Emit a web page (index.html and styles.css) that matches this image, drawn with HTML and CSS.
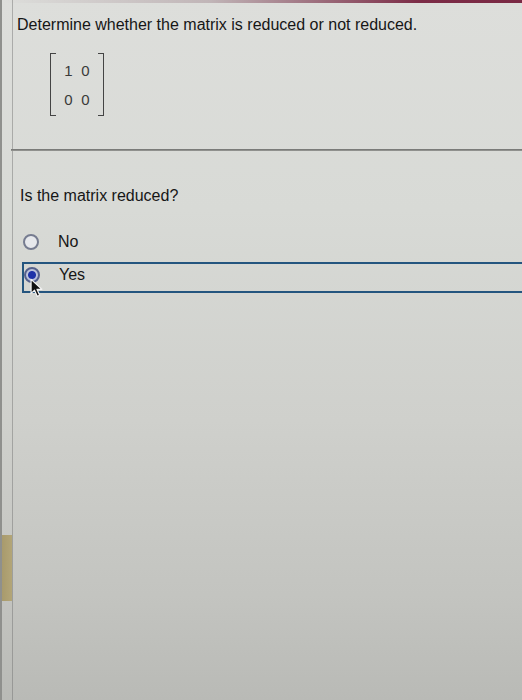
FILE: index.html
```html
<!DOCTYPE html>
<html>
<head>
<meta charset="utf-8">
<link rel="stylesheet" href="styles.css">
</head>
<body>
<div class="page">
  <div class="topbar"></div>
  <div class="gutter"><div class="tab"></div></div>
  <div class="content">
    <p class="title">Determine whether the matrix is reduced or not reduced.</p>
    <div class="matrix">
      <span>1</span><span>0</span>
      <span>0</span><span>0</span>
    </div>
    <div class="rule"></div>
    <p class="question">Is the matrix reduced?</p>
    <div class="options">
      <label class="option">
        <span class="radio"></span>
        <span class="label">No</span>
      </label>
      <label class="option selected">
        <span class="radio checked"></span>
        <span class="label">Yes</span>
        <svg class="cursor" width="14" height="20" viewBox="0 0 13 18">
          <path d="M1 1 L1 14 L4.2 11 L6.8 16.8 L9 15.8 L6.5 10.2 L11 10.2 Z" fill="#111" stroke="#f4f4f4" stroke-width="1.1" stroke-linejoin="round"/>
        </svg>
      </label>
    </div>
  </div>
</div>
</body>
</html>
```
FILE: styles.css
```css
html, body {
  margin: 0;
  padding: 0;
}
body {
  font-family: "Liberation Sans", Arial, sans-serif;
  color: #1c1c1c;
}
.page {
  position: relative;
  display: flex;
  width: 522px;
  height: 700px;
  overflow: hidden;
  background: linear-gradient(180deg, #dddedb 0%, #d8dad6 30%, #cfd0cc 60%, #c3c4c0 85%, #b9bab6 100%);
  border-left: 2px solid #8f908d;
  box-sizing: border-box;
}
.topbar {
  position: absolute;
  top: 0;
  left: 0;
  right: 0;
  height: 3px;
  background: linear-gradient(90deg, rgba(170,170,170,0) 0%, rgba(150,120,130,0.4) 40%, #7c2c47 80%, #7a2944 100%);
}
.gutter {
  flex: 0 0 auto;
  width: 10px;
  border-right: 1px solid rgba(110,110,110,0.45);
}
.tab {
  margin-top: 535px;
  height: 66px;
  background: linear-gradient(90deg, #a89a6c, #b3a678);
}
.content {
  flex: 1 1 auto;
  display: flex;
  flex-direction: column;
  min-width: 0;
}
.title {
  margin: 15px 0 0 4px;
  font-size: 16px;
  line-height: 19px;
  white-space: nowrap;
  color: #161616;
}
.matrix {
  position: relative;
  margin: 19px 0 0 37px;
  width: 54px;
  height: 63px;
  box-sizing: border-box;
  display: grid;
  grid-template-columns: 17px 17px;
  grid-template-rows: 29px 29px;
  align-content: center;
  justify-content: center;
  font-family: "Liberation Sans", Arial, sans-serif;
  font-size: 15px;
  color: #3a3a3a;
  border-left: 1.5px solid #444;
  border-right: 1.5px solid #444;
}
.matrix::before,
.matrix::after {
  content: "";
  position: absolute;
  top: 0;
  bottom: 0;
  width: 5px;
  border-top: 1.5px solid #444;
  border-bottom: 1.5px solid #444;
}
.matrix::before { left: 0; }
.matrix::after { right: 0; }
.matrix span {
  display: flex;
  align-items: center;
  justify-content: center;
}
.rule {
  margin: 33px 0 0 -2px;
  height: 2px;
  background: linear-gradient(180deg, #6f706e, #9a9b98);
}
.question {
  margin: 35px 0 0 7px;
  font-size: 16px;
  line-height: 19px;
  color: #161616;
}
.options {
  margin: 22px 0 0 0;
  display: flex;
  flex-direction: column;
  gap: 5px;
}
.option {
  position: relative;
  display: flex;
  align-items: center;
  gap: 19px;
  height: 30px;
  padding-left: 10px;
  font-size: 16px;
  color: #161616;
}
.option.selected {
  margin-left: 9px;
  padding-left: 0;
  padding-bottom: 5px;
  box-sizing: border-box;
  height: 31px;
  border-top: 2px solid #24557f;
  border-bottom: 2px solid #24557f;
  border-left: 2px solid #24557f;
  margin-right: -4px;
}
.radio {
  width: 12px;
  height: 12px;
  border-radius: 50%;
  border: 2px solid #767c90;
  background: #e6e8ec;
  flex: 0 0 auto;
}
.radio.checked {
  border-color: #55618c;
  background: radial-gradient(circle, #1f33a8 0 3.5px, #bcc3dc 4.5px);
}
.label {
  margin-left: 0;
}
.cursor {
  position: absolute;
  left: 6px;
  top: 14px;
}
```
